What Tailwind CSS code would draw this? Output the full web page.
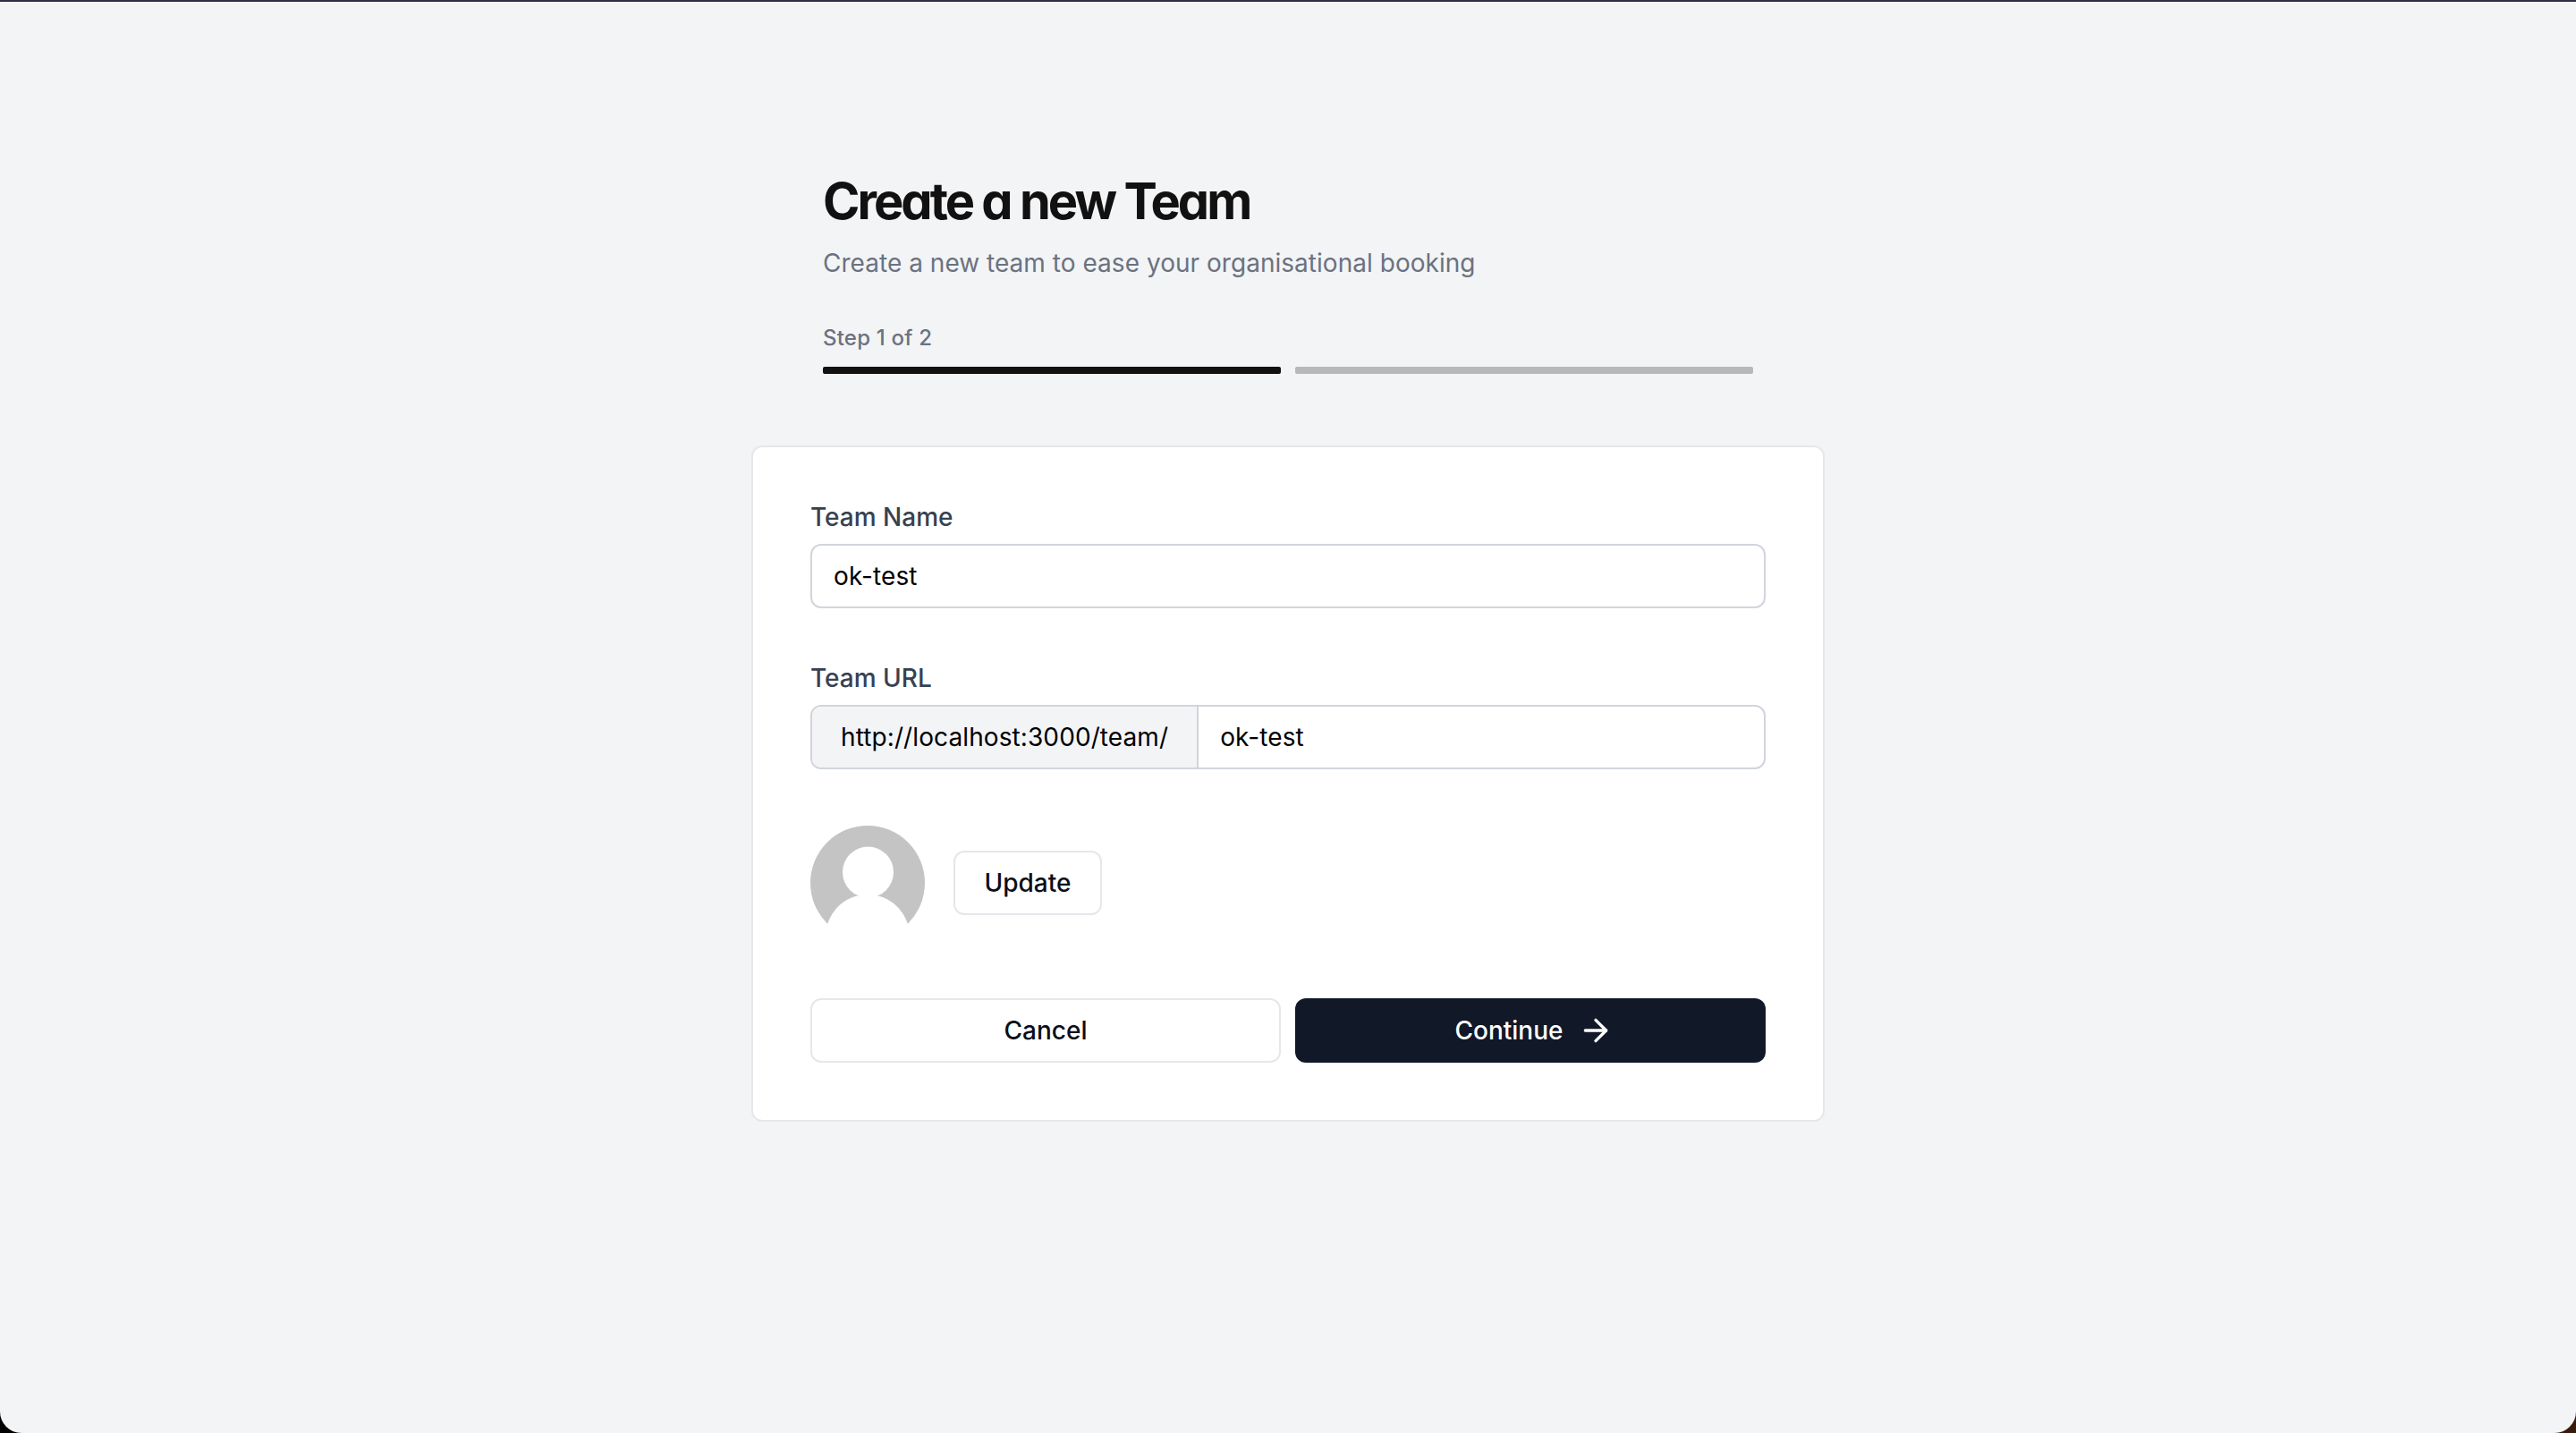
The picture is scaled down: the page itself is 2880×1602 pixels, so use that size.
<!DOCTYPE html>
<html lang="en">
<head>
  <meta charset="UTF-8">
  <title>Create a new Team</title>
  <script src="https://cdn.jsdelivr.net/npm/@tailwindcss/browser@4"></script>
</head>
<body class="bg-[linear-gradient(90deg,#000_0%,#000_50%,#3a1a0c_100%)] font-['Inter',sans-serif]">

  <!-- Window -->
  <div class="h-[1602px] overflow-hidden rounded-b-[24px] border-t-2 border-[#2b2e42] bg-[#f3f4f6]">
    <div class="mx-auto w-[1200px] pt-[191px]">

      <!-- Header -->
      <div class="px-[80px]">
        <h1 class="text-[56px] leading-[64px] font-bold tracking-[-0.053em] text-[#111111] [font-feature-settings:'cv11']">Create a new Team</h1>
        <p class="mt-[17px] text-[28px] leading-[40px] tracking-[0.03px] text-[#6b7280]">Create a new team to ease your organisational booking</p>
        <p class="mt-[48px] text-[24px] leading-[32px] font-medium tracking-[0.2px] text-[#6b7280]">Step 1 of 2</p>
        <div class="mt-[16px] flex gap-4">
          <div class="h-2 flex-1 rounded-[2px] bg-[#111111]"></div>
          <div class="h-2 flex-1 rounded-[2px] bg-[#b7b8ba]"></div>
        </div>
      </div>

      <!-- Card -->
      <form class="mt-[80px] h-[756px] rounded-[12px] border-2 border-[#e5e7eb] bg-white px-[64px] pt-[58px]">
        <label class="block text-[28px] leading-[40px] font-medium text-[#374151]">Team Name</label>
        <input type="text" value="ok-test" class="mt-[10px] block h-[72px] w-full rounded-[12px] border-2 border-[#d1d5db] px-[24px] text-[28px] tracking-[0.1px] text-black">

        <label class="mt-[58px] block text-[28px] leading-[40px] font-medium text-[#374151]">Team URL</label>
        <div class="mt-[10px] flex h-[72px] overflow-hidden rounded-[12px] border-2 border-[#d1d5db]">
          <span class="flex items-center border-r-2 border-[#d1d5db] bg-[#f3f4f6] px-[32px] text-[28px] tracking-[0.1px] text-black">http://localhost:3000/team/</span>
          <input type="text" value="ok-test" class="min-w-0 flex-1 px-[24px] text-[28px] tracking-[0.1px] text-black">
        </div>

        <!-- Avatar -->
        <div class="mt-[63px] flex items-center gap-8">
          <svg class="h-[128px] w-[128px] shrink-0" viewBox="0 0 128 128">
            <circle cx="64" cy="64" r="64" fill="#c4c4c4"/>
            <circle cx="64.5" cy="52" r="28.5" fill="#fff"/>
            <circle cx="64" cy="124" r="47" fill="#fff"/>
          </svg>
          <button type="button" class="h-[72px] w-[166px] rounded-[12px] border-2 border-[#e5e7eb] bg-white text-[28px] font-medium text-[#0a0f1a]">Update</button>
        </div>

        <!-- Actions -->
        <div class="mt-[65px] grid grid-cols-2 gap-4">
          <button type="button" class="h-[72px] rounded-[12px] border-2 border-[#e5e7eb] bg-white text-[28px] font-medium text-[#0a0f1a]">Cancel</button>
          <button type="button" class="flex h-[72px] items-center justify-center rounded-[12px] bg-[#111827] text-[28px] font-medium text-white">
            Continue
            <svg class="-mr-2 ml-4 h-10 w-10" viewBox="0 0 24 24" fill="none" stroke="currentColor" stroke-width="2" stroke-linecap="round" stroke-linejoin="round"><path d="M5 12h14"/><path d="M12 5l7 7-7 7"/></svg>
          </button>
        </div>
      </form>
    </div>
  </div>

</body>
</html>
